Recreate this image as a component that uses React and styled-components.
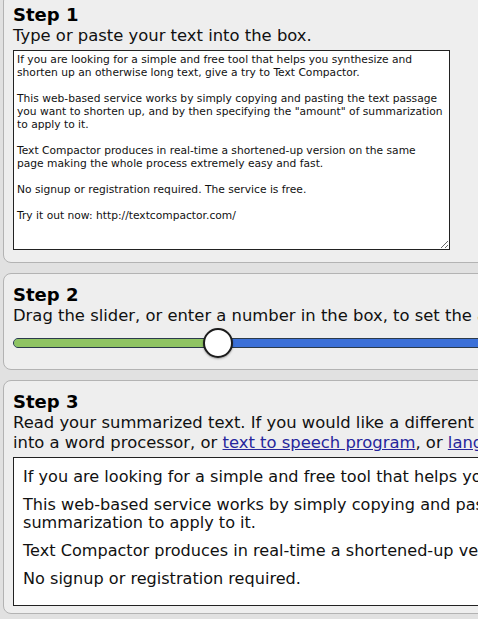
import React from "react";
import styled, { createGlobalStyle } from "styled-components";

const Global = createGlobalStyle`
  html, body {
    margin: 0;
    padding: 0;
    background: #e1e1e1;
    overflow: hidden;
  }
  body {
    font-family: "DejaVu Sans", Verdana, sans-serif;
    color: #111;
  }
`;

const Page = styled.div`
  display: flex;
  flex-direction: column;
  gap: 10px;
  margin-top: -7px;
  padding-left: 3px;
  width: 760px;
`;

const Panel = styled.section`
  background: #eeeeee;
  border: 1px solid #b3b3b3;
  border-radius: 8px;
  padding: 10px 9px ${(p) => p.$bottom || 11}px 9px;
  display: flex;
  flex-direction: column;
`;

const Heading = styled.h2`
  margin: 0;
  font-family: "DejaVu Sans", Verdana, sans-serif;
  font-weight: bold;
  font-size: 18px;
  line-height: 22px;
  color: #000;
`;

const Lead = styled.p`
  margin: 0;
  font-size: 16.4px;
  line-height: 20px;
  white-space: nowrap;
  color: #111;
`;

const Link = styled.a`
  color: #26269c;
  text-decoration: underline;
`;

const TextBox = styled.textarea`
  margin-top: 4px;
  width: 437px;
  height: 200px;
  box-sizing: border-box;
  border: 1px solid #222;
  border-radius: 0;
  background: #fff;
  padding: 2px 3px;
  font-family: "DejaVu Sans", "Lucida Grande", sans-serif;
  font-size: 10.7px;
  line-height: 13px;
  color: #111;
  overflow: hidden;
  outline: none;
  resize: both;
`;

const SliderRow = styled.div`
  margin-top: 2px;
  height: 30px;
  position: relative;
  display: flex;
  align-items: center;
`;

const Track = styled.div`
  flex: 1;
  height: 10px;
  box-sizing: border-box;
  border: 1px solid #2b3a4a;
  border-radius: 6px;
  background: #3b70d8;
  overflow: hidden;
  display: flex;
`;

const Fill = styled.div`
  height: 100%;
  background: #8fc463;
  border-right: 1px solid #2b3a4a;
`;

const Thumb = styled.div`
  position: absolute;
  top: 0;
  width: 30px;
  height: 30px;
  box-sizing: border-box;
  border-radius: 50%;
  background: #fff;
  border: 2px solid #1c1c1c;
  box-shadow: 0 1px 2px rgba(0, 0, 0, 0.35);
`;

const Output = styled.div`
  margin-top: 4px;
  background: #fff;
  border: 1px solid #222;
  padding: 10px 9px 17px 9px;
  display: flex;
  flex-direction: column;
  gap: 10px;
`;

const OutPara = styled.p`
  margin: 0;
  font-size: 16.1px;
  line-height: 18px;
  white-space: nowrap;
  color: #111;
`;

const sourceText = `If you are looking for a simple and free tool that helps you synthesize and
shorten up an otherwise long text, give a try to Text Compactor.

This web-based service works by simply copying and pasting the text passage
you want to shorten up, and by then specifying the "amount" of summarization
to apply to it.

Text Compactor produces in real-time a shortened-up version on the same
page making the whole process extremely easy and fast.

No signup or registration required. The service is free.

Try it out now: http://textcompactor.com/`;

export default function App() {
  const thumbLeft = 190;
  return (
    <>
      <Global />
      <Page>
        <Panel $bottom={12}>
          <Heading>Step 1</Heading>
          <Lead>Type or paste your text into the box.</Lead>
          <TextBox wrap="off" defaultValue={sourceText} />
        </Panel>

        <Panel $bottom={11}>
          <Heading>Step 2</Heading>
          <Lead>
            Drag the slider, or enter a number in the box, to set the amount of summarization.
          </Lead>
          <SliderRow>
            <Track>
              <Fill style={{ width: thumbLeft + 15 }} />
            </Track>
            <Thumb style={{ left: thumbLeft }} />
          </SliderRow>
        </Panel>

        <Panel $bottom={7}>
          <Heading>Step 3</Heading>
          <Lead>
            Read your summarized text. If you would like a different format, copy and paste it
            <br />
            into a word processor, or <Link href="#">text to speech program</Link>, or{" "}
            <Link href="#">language translator</Link>.
          </Lead>
          <Output>
            <OutPara>
              If you are looking for a simple and free tool that helps you synthesize and shorten up an otherwise long text, give a try to Text Compactor.
            </OutPara>
            <OutPara>
              This web-based service works by simply copying and pasting the text passage you want to shorten up, and by then specifying the "amount" of
              <br />
              summarization to apply to it.
            </OutPara>
            <OutPara>
              Text Compactor produces in real-time a shortened-up version on the same page making the whole process extremely easy and fast.
            </OutPara>
            <OutPara>No signup or registration required.</OutPara>
          </Output>
        </Panel>
      </Page>
    </>
  );
}
